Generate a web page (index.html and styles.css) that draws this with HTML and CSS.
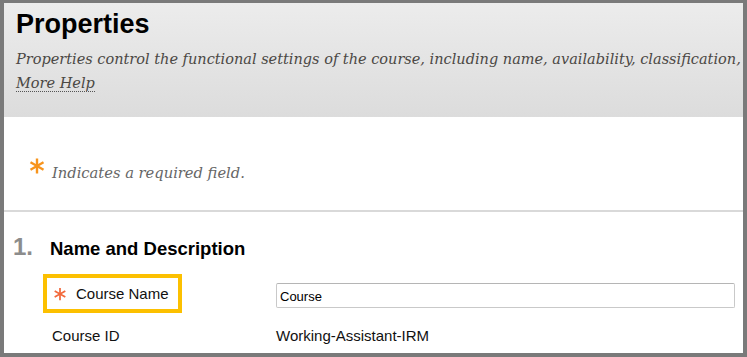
FILE: index.html
```html
<!DOCTYPE html>
<html>
<head>
<meta charset="utf-8">
<link rel="stylesheet" href="styles.css">
</head>
<body>
<div class="frame">
  <div class="header">
    <h1 class="title">Properties</h1>
    <p class="desc">Properties control the functional settings of the course, including name, availability, classification,<br><a class="help">More Help</a></p>
  </div>
  <div class="required">
    <svg class="star star-note" viewBox="0 0 16 16"><g stroke="#f7941d" stroke-width="2.4" stroke-linecap="butt"><line x1="8" y1="0.5" x2="8" y2="15.5"/><line x1="1.5" y1="4.25" x2="14.5" y2="11.75"/><line x1="1.5" y1="11.75" x2="14.5" y2="4.25"/></g></svg>
    <span class="req-text">Indicates a required field.</span>
  </div>
  <div class="section">
    <div class="section-head">
      <span class="num">1.</span>
      <h2 class="section-title">Name and Description</h2>
    </div>
    <div class="row row-name">
      <div class="label-box">
        <svg class="star star-label" viewBox="0 0 16 16"><g stroke="#f26a3d" stroke-width="2" stroke-linecap="butt"><line x1="8" y1="1" x2="8" y2="15"/><line x1="1.9" y1="4.5" x2="14.1" y2="11.5"/><line x1="1.9" y1="11.5" x2="14.1" y2="4.5"/></g></svg>
        <span class="label">Course Name</span>
      </div>
      <div class="field"><input class="text-input" type="text" value="Course"></div>
    </div>
    <div class="row row-id">
      <div class="label plain">Course ID</div>
      <div class="value">Working-Assistant-IRM</div>
    </div>
  </div>
</div>
</body>
</html>
```

FILE: styles.css
```css
html, body {
  margin: 0;
  padding: 0;
}
body {
  width: 747px;
  height: 357px;
  overflow: hidden;
  background: #fff;
}
.frame {
  box-sizing: border-box;
  width: 747px;
  height: 357px;
  border-style: solid;
  border-color: #7a7a7a;
  border-width: 3px 4px 4px 4px;
  background: #fff;
  overflow: hidden;
}
.header {
  box-sizing: border-box;
  height: 114px;
  padding: 5px 0 0 12px;
  background: linear-gradient(to bottom, #ececec 0%, #dcdcdc 100%);
  white-space: nowrap;
  overflow: hidden;
}
.title {
  margin: 0;
  font-family: "Liberation Sans", Arial, sans-serif;
  font-weight: bold;
  font-size: 27px;
  line-height: 32px;
  color: #000;
}
.desc {
  margin: 7px 0 0 0;
  font-family: "DejaVu Serif", Georgia, serif;
  font-style: italic;
  font-size: 14.5px;
  line-height: 24px;
  color: #4b4844;
  white-space: nowrap;
}
.help {
  color: #4b4844;
  text-decoration: none;
  border-bottom: 1px dotted #555;
}
.required {
  display: flex;
  align-items: flex-start;
  height: 95px;
  box-sizing: border-box;
  padding: 39px 0 0 25px;
  border-bottom: 2px solid #d9d9d9;
}
.star {
  display: block;
  flex: none;
}
.star-note {
  width: 16px;
  height: 16px;
  margin-top: 2px;
}
.req-text {
  margin-left: 7px;
  margin-top: 8px;
  font-family: "DejaVu Serif", Georgia, serif;
  font-style: italic;
  font-size: 14.7px;
  line-height: 18px;
  color: #666;
}
.section {
  padding: 21px 0 0 0;
}
.section-head {
  display: flex;
  align-items: baseline;
  height: 28px;
}
.num {
  padding-left: 9px;
  box-sizing: border-box;
  flex: none;
  font-family: "Liberation Sans", Arial, sans-serif;
  font-weight: bold;
  font-size: 24px;
  color: #8c8c8c;
  width: 46px;
}
.section-title {
  margin: 0;
  font-family: "Liberation Sans", Arial, sans-serif;
  font-weight: bold;
  font-size: 18.5px;
  color: #000;
}
.row {
  display: grid;
  grid-template-columns: 233px 459px;
  align-items: center;
  margin-left: 39px;
}
.row-name {
  margin-top: 13px;
  height: 39px;
}
.label-box {
  box-sizing: border-box;
  width: 139px;
  height: 39px;
  border: 4px solid #fcc000;
  display: flex;
  align-items: center;
  padding-left: 6px;
}
.star-label {
  width: 14px;
  height: 14px;
  margin-right: 9px;
}
.label {
  font-family: "Liberation Sans", Arial, sans-serif;
  font-size: 15px;
  color: #111;
}
.field {
  display: flex;
}
.text-input {
  box-sizing: border-box;
  width: 459px;
  height: 25px;
  margin-top: 4px;
  border: 1px solid #c9c9c9;
  border-top-color: #b5b5b5;
  border-radius: 2px;
  padding: 2px 3px 0 3px;
  font-family: "Liberation Sans", Arial, sans-serif;
  font-size: 13px;
  color: #000;
  background: #fff;
  outline: none;
}
.row-id {
  margin-top: 11px;
  height: 22px;
}
.plain {
  padding-left: 9px;
}
.value {
  font-family: "Liberation Sans", Arial, sans-serif;
  font-size: 15px;
  color: #111;
}
```
